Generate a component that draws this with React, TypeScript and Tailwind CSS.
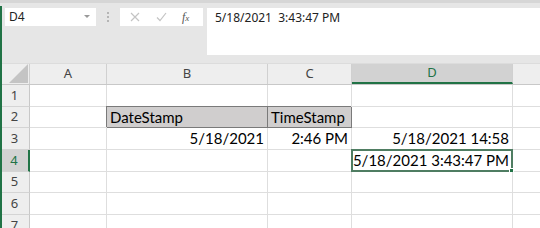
import React from "react";

const cols = ["A", "B", "C", "D"];
const rowHeights = [22, 21, 22, 22, 21, 22, 22];

type Cell = { text?: string; align?: "left" | "right"; box?: boolean };

const data: Record<string, Cell> = {
  B2: { text: "DateStamp", align: "left", box: true },
  C2: { text: "TimeStamp", align: "left", box: true },
  B3: { text: "5/18/2021", align: "right" },
  C3: { text: "2:46 PM", align: "right" },
  D3: { text: "5/18/2021 14:58", align: "right" },
  D4: { text: "5/18/2021 3:43:47 PM", align: "right" },
};

export default function App() {
  const colW = ["w-[77px]", "w-[161px]", "w-[84px]", "w-[161px]", "w-[27px]"];
  return (
    <div className="w-[540px] h-[228px] overflow-hidden bg-white relative font-['Noto_Sans',sans-serif]">
      {/* green left edge */}
      <div className="absolute left-0 top-[6px] bottom-0 w-[2px] bg-[#217346] z-20" />
      {/* toolbar */}
      <div className="h-[63px] bg-[#e6e6e6] border-t-[3px] border-[#d6d6d6] flex items-start pt-[5px] pl-[5px]">
        <div className="w-[91px] h-[18px] bg-white flex items-center justify-between pl-[4px] pr-[6px] text-[12px] text-[#222]">
          <span>D4</span>
          <svg width="6" height="4" viewBox="0 0 6 4"><path d="M0 0h6L3 3z" fill="#9a9a9a" /></svg>
        </div>
        <div className="w-[24px] h-[18px] flex flex-col items-center justify-center gap-[2px]">
          <span className="w-[2px] h-[2px] bg-[#b5b5b5]" />
          <span className="w-[2px] h-[2px] bg-[#b5b5b5]" />
          <span className="w-[2px] h-[2px] bg-[#b5b5b5]" />
        </div>
        <div className="w-[83px] h-[18px] bg-white flex items-center">
          <svg className="ml-[10px]" width="10" height="10" viewBox="0 0 10 10">
            <path d="M1 1L9 9M9 1L1 9" stroke="#c4c4c4" strokeWidth="1.2" />
          </svg>
          <svg className="ml-[16px]" width="11" height="10" viewBox="0 0 11 10">
            <path d="M1 5.5L4 8.5L10 1" stroke="#c4c4c4" strokeWidth="1.2" fill="none" />
          </svg>
          <span className="ml-[15px] text-[12px] italic text-[#555] font-['Liberation_Serif',serif] leading-none">
            f<span className="text-[9px]">x</span>
          </span>
        </div>
        <div className="ml-[4px] flex-1 h-[47px] bg-white pl-[8px] pt-[1px] text-[12px] text-[#222] whitespace-pre">
          {"5/18/2021  3:43:47 PM"}
        </div>
      </div>
      {/* sheet */}
      <div className="flex flex-col">
        {/* column header */}
        <div className="flex h-[22px] bg-[#eeeeee] border-t border-[#dcdcdc] border-b border-b-[#c8c8c8] text-[13px] text-[#444]">
          <div className="w-[30px] h-full relative border-r border-[#d0d0d0]">
            <svg className="absolute right-[1px] bottom-[1px]" width="19" height="19" viewBox="0 0 19 19">
              <path d="M19 0V19H0z" fill="#c4c4c4" />
            </svg>
          </div>
          {cols.map((c, i) => (
            <div
              key={c}
              className={`${colW[i]} h-full flex items-center justify-center border-r border-[#d0d0d0] ${
                c === "D" ? "bg-[#d2d2d2] text-[#217346] border-b-2 border-b-[#217346]" : ""
              }`}
            >
              {c}
            </div>
          ))}
          <div className="flex-1 h-full" />
        </div>
        {rowHeights.map((h, r) => {
          const rn = r + 1;
          return (
            <div key={rn} className="flex" style={{ height: h }}>
              <div
                className={`w-[30px] h-full flex items-center justify-center text-[13px] border-b border-[#d4d4d4] border-r ${
                  rn === 4
                    ? "bg-[#d2d2d2] text-[#217346] border-r-2 border-r-[#217346]"
                    : "bg-[#eeeeee] text-[#444] border-r-[#c8c8c8]"
                }`}
              >
                {rn}
              </div>
              {cols.map((c, i) => {
                const key = `${c}${rn}`;
                const cell = data[key];
                const active = key === "D4";
                const borderCls = cell?.box
                  ? "bg-[#d0cece] border-r border-b border-[#7a7a7a] shadow-[-1px_-1px_0_0_#7a7a7a]"
                  : "border-r border-b border-[#dedede]";
                return (
                  <div
                    key={key}
                    className={`${colW[i]} h-full relative ${borderCls} font-['Lato',sans-serif] text-[15px] text-black flex items-center px-[3px] whitespace-nowrap ${
                      cell?.align === "right" ? "justify-end" : "justify-start"
                    }`}
                  >
                    {cell?.text}
                    {active && (
                      <div className="absolute -left-px -top-px -right-px -bottom-px border-2 border-[#4f7d62] pointer-events-none">
                        <div className="absolute -right-[3px] -bottom-[3px] w-[5px] h-[5px] bg-[#217346] border border-white" />
                      </div>
                    )}
                  </div>
                );
              })}
              <div className="flex-1 h-full border-b border-[#dedede]" />
            </div>
          );
        })}
      </div>
    </div>
  );
}
